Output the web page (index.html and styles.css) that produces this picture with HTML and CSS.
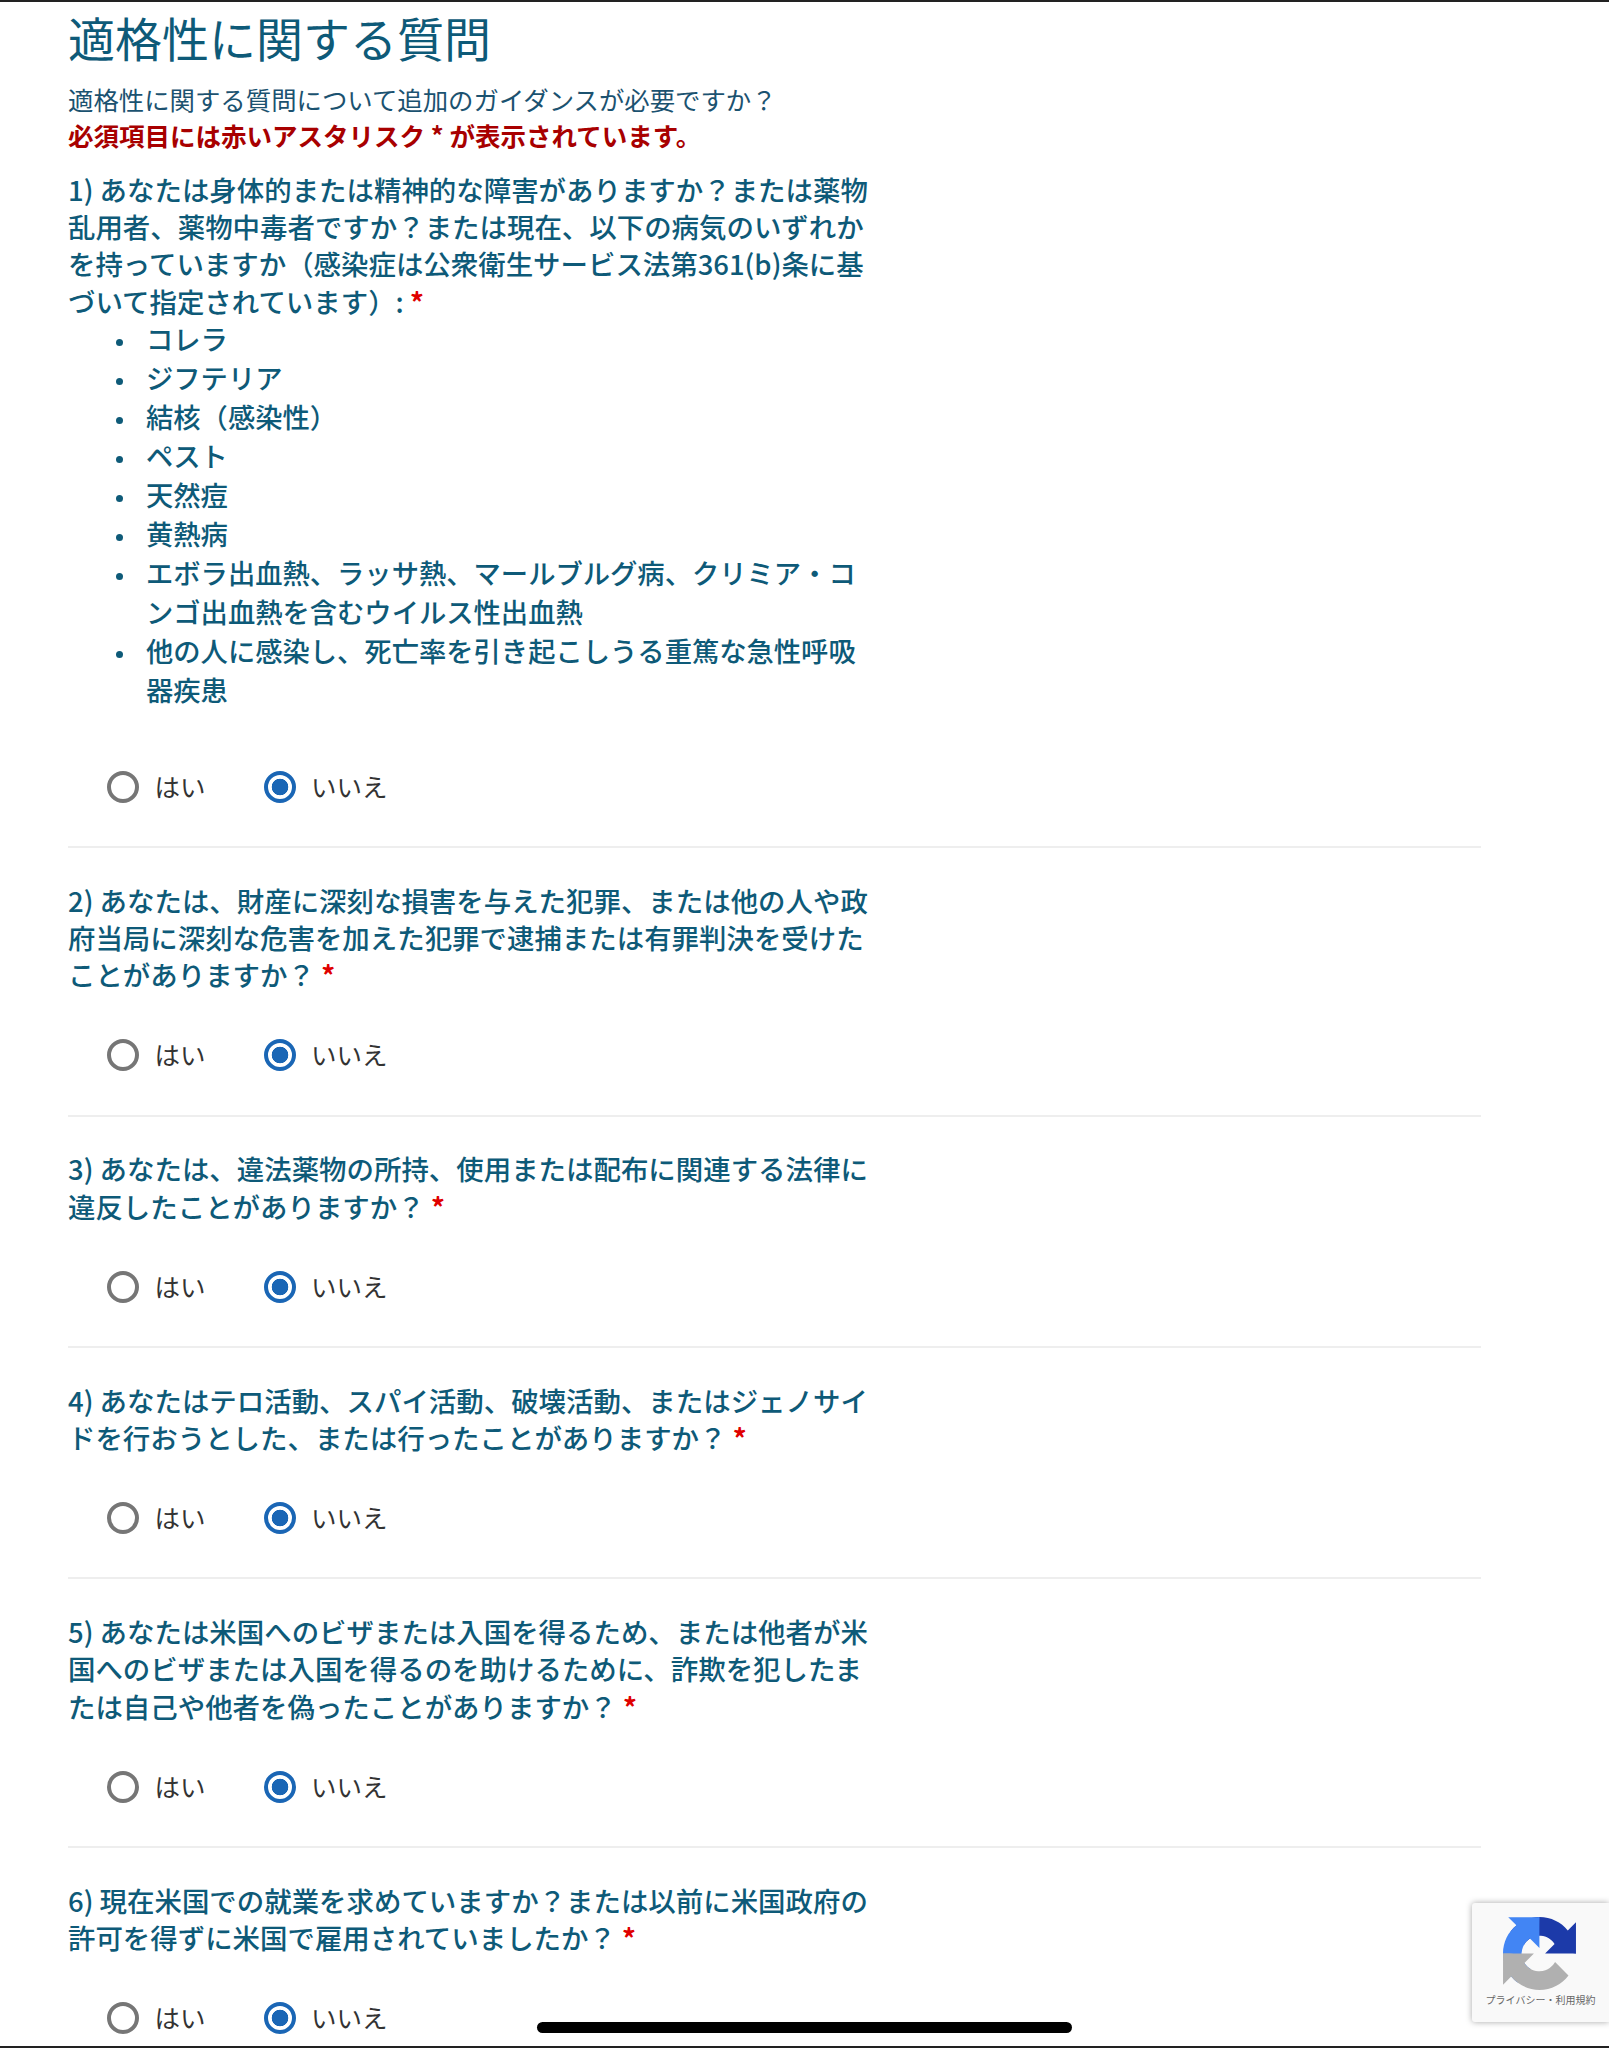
FILE: index.html
```html
<!DOCTYPE html>
<html lang="ja">
<head>
<meta charset="utf-8">
<title>適格性に関する質問</title>
<link rel="stylesheet" href="styles.css">
</head>
<body>
<main class="page">
  <h1 class="title">適格性に関する質問</h1>
  <p class="guide">適格性に関する質問について追加のガイダンスが必要ですか？</p>
  <p class="required">必須項目には赤いアスタリスク * が表示されています。</p>

  <section class="question first">
    <p class="q-text">1) あなたは身体的または精神的な障害がありますか？または薬物乱用者、薬物中毒者ですか？または現在、以下の病気のいずれかを持っていますか（感染症は公衆衛生サービス法第361(b)条に基づいて指定されています）: <span class="star">*</span></p>
    <ul class="disease-list">
      <li>コレラ</li>
      <li>ジフテリア</li>
      <li>結核（感染性）</li>
      <li>ペスト</li>
      <li>天然痘</li>
      <li>黄熱病</li>
      <li>エボラ出血熱、ラッサ熱、マールブルグ病、クリミア・コンゴ出血熱を含むウイルス性出血熱</li>
      <li>他の人に感染し、死亡率を引き起こしうる重篤な急性呼吸器疾患</li>
    </ul>
    <div class="answers long">
      <label class="answer"><input type="radio" name="q1"><span>はい</span></label>
      <label class="answer"><input type="radio" name="q1" checked><span>いいえ</span></label>
    </div>
  </section>

  <section class="question">
    <p class="q-text">2) あなたは、財産に深刻な損害を与えた犯罪、または他の人や政府当局に深刻な危害を加えた犯罪で逮捕または有罪判決を受けたことがありますか？ <span class="star">*</span></p>
    <div class="answers">
      <label class="answer"><input type="radio" name="q2"><span>はい</span></label>
      <label class="answer"><input type="radio" name="q2" checked><span>いいえ</span></label>
    </div>
  </section>

  <section class="question">
    <p class="q-text">3) あなたは、違法薬物の所持、使用または配布に関連する法律に違反したことがありますか？ <span class="star">*</span></p>
    <div class="answers">
      <label class="answer"><input type="radio" name="q3"><span>はい</span></label>
      <label class="answer"><input type="radio" name="q3" checked><span>いいえ</span></label>
    </div>
  </section>

  <section class="question">
    <p class="q-text">4) あなたはテロ活動、スパイ活動、破壊活動、またはジェノサイドを行おうとした、または行ったことがありますか？ <span class="star">*</span></p>
    <div class="answers">
      <label class="answer"><input type="radio" name="q4"><span>はい</span></label>
      <label class="answer"><input type="radio" name="q4" checked><span>いいえ</span></label>
    </div>
  </section>

  <section class="question">
    <p class="q-text">5) あなたは米国へのビザまたは入国を得るため、または他者が米国へのビザまたは入国を得るのを助けるために、詐欺を犯したまたは自己や他者を偽ったことがありますか？ <span class="star">*</span></p>
    <div class="answers">
      <label class="answer"><input type="radio" name="q5"><span>はい</span></label>
      <label class="answer"><input type="radio" name="q5" checked><span>いいえ</span></label>
    </div>
  </section>

  <section class="question">
    <p class="q-text">6) 現在米国での就業を求めていますか？または以前に米国政府の許可を得ずに米国で雇用されていましたか？ <span class="star">*</span></p>
    <div class="answers">
      <label class="answer"><input type="radio" name="q6"><span>はい</span></label>
      <label class="answer"><input type="radio" name="q6" checked><span>いいえ</span></label>
    </div>
  </section>
</main>

<aside class="recaptcha">
  <svg class="recaptcha-logo" viewBox="0 0 64 64" aria-hidden="true">
    <path fill="#1c3aa9" d="M64 31.955l-.033-1.37V4.687l-7.16 7.16C50.948 4.674 42.033.093 32.05.093c-10.4 0-19.622 4.96-25.458 12.64l11.736 11.86a15.55 15.55 0 0 1 4.754-5.334c2.05-1.6 4.952-2.906 9.015-2.906.49 0 .87.057 1.148.165 5.034.4 9.4 3.178 11.968 7.21l-8.309 8.309c10.524-.041 22.412-.066 26.848.085"/>
    <path fill="#4285f4" d="M31.862.094l-1.37.033H4.594l7.16 7.16C4.58 13.147 0 22.06 0 32.045c0 10.4 4.96 19.622 12.64 25.458l11.86-11.736a15.55 15.55 0 0 1-5.334-4.754c-1.6-2.05-2.906-4.952-2.906-9.015 0-.49.057-.87.165-1.148.4-5.034 3.178-9.4 7.21-11.968l8.309 8.309c-.041-10.524-.066-22.412.085-26.848"/>
    <path fill="#b0b0b0" d="M.001 32.045l.033 1.37v25.898l7.16-7.16c5.86 7.173 14.774 11.754 24.758 11.754 10.4 0 19.622-4.96 25.458-12.64l-11.736-11.86a15.55 15.55 0 0 1-4.754 5.334c-2.05 1.6-4.952 2.906-9.015 2.906-.49 0-.87-.057-1.148-.165-5.034-.4-9.4-3.178-11.968-7.21l8.309-8.309c-10.524.041-22.412.066-26.848-.085"/>
  </svg>
  <p class="recaptcha-links">プライバシー・利用規約</p>
</aside>
<div class="home-bar"></div>
</body>
</html>
```

FILE: styles.css
```css
* { box-sizing: border-box; }

html, body {
  margin: 0;
  padding: 0;
  height: 2048px;
  overflow: hidden;
  background: #fff;
}

body {
  position: relative;
  font-family: "Noto Sans CJK JP", "Liberation Sans", sans-serif;
  border-top: 2px solid #222;
  border-bottom: 2px solid #222;
}

.page {
  width: 1481px;
  padding: 0 0 0 68px;
}

.title {
  margin: 0;
  padding-top: 6.5px;
  font-size: 47px;
  line-height: 56px;
  font-weight: 400;
  color: #0e5a78;
}

.guide {
  margin: 16px 0 0;
  font-size: 25.4px;
  line-height: 36.5px;
  color: #1b5270;
}

.required {
  margin: 0;
  font-size: 25.5px;
  line-height: 36px;
  font-weight: 700;
  color: #a80000;
}

.question {
  border-bottom: 2px solid #eeeeee;
  padding-top: 33.5px;
  padding-bottom: 39.5px;
}

.question.first {
  padding-top: 17.5px;
}

.question:last-child {
  border-bottom: 0;
}

.q-text {
  margin: 0;
  width: 812px;
  font-size: 27.45px;
  line-height: 37.4px;
  font-weight: 500;
  color: #0e5a78;
}

.star {
  color: #e00000;
  font-weight: 700;
}

.disease-list {
  margin: -1px 0 0;
  padding: 0 0 0 78px;
  width: 800px;
  font-size: 27.3px;
  line-height: 39px;
  font-weight: 500;
  color: #0e5a78;
  list-style: none;
}

.disease-list li {
  position: relative;
}

.disease-list li::before {
  content: "";
  position: absolute;
  left: -30px;
  top: 20px;
  width: 7px;
  height: 7px;
  border-radius: 50%;
  background: #0e5a78;
}

.answers {
  display: flex;
  gap: 58px;
  padding-left: 39px;
  margin-top: 41.5px;
}

.answers.long {
  margin-top: 57.5px;
}

.answer {
  display: flex;
  align-items: center;
  gap: 15.5px;
  height: 40px;
  font-size: 25.5px;
  color: #333;
}

.answer span {
  padding-bottom: 3px;
}

.answer input {
  appearance: none;
  -webkit-appearance: none;
  margin: 0;
  width: 32px;
  height: 32px;
  border: 4px solid #767676;
  border-radius: 50%;
  background: #fff;
}

.answer input:checked {
  border-color: #1a66b5;
  background: radial-gradient(circle, #1a66b5 0 8px, #fff 8.6px);
}

.recaptcha {
  position: absolute;
  left: 1472px;
  top: 1901px;
  width: 137px;
  height: 119px;
  background: #f9f9f9;
  border-radius: 3px 0 0 3px;
  box-shadow: 0 0 6px rgba(0, 0, 0, 0.35);
  display: flex;
  flex-direction: column;
  align-items: center;
}

.recaptcha-logo {
  width: 73px;
  height: 73px;
  margin-top: 14px;
  margin-left: -2px;
}

.recaptcha-links {
  margin: 3px 0 0;
  font-size: 10px;
  line-height: 14px;
  color: #666;
  white-space: nowrap;
}

.home-bar {
  position: absolute;
  left: 537px;
  top: 2020px;
  width: 535px;
  height: 11px;
  border-radius: 6px;
  background: #000;
}
```
